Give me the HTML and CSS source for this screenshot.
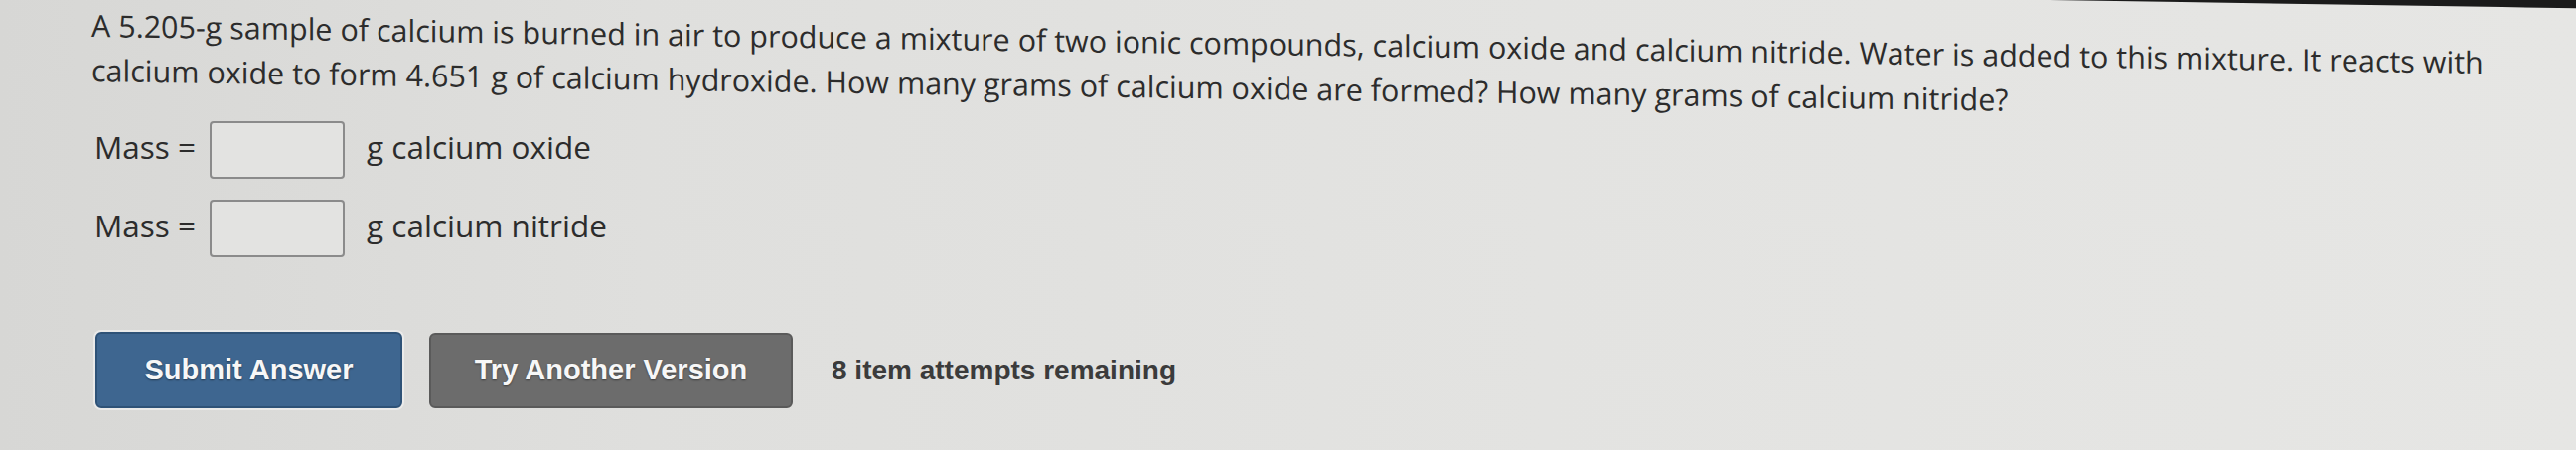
FILE: index.html
```html
<!DOCTYPE html>
<html lang="en">
<head>
<meta charset="utf-8">
<title>Question</title>
<link rel="stylesheet" href="styles.css">
</head>
<body>
<div class="bezel"></div>
<main class="question">
  <p class="prompt">A 5.205-g sample of calcium is burned in air to produce a mixture of two ionic compounds, calcium oxide and calcium nitride. Water is added to this mixture. It reacts with calcium oxide to form 4.651 g of calcium hydroxide. How many grams of calcium oxide are formed? How many grams of calcium nitride?</p>
  <div class="answers">
    <div class="answer-row">
      <span class="label">Mass =</span>
      <input class="answer-box" type="text" aria-label="grams of calcium oxide">
      <span class="unit">g calcium oxide</span>
    </div>
    <div class="answer-row">
      <span class="label">Mass =</span>
      <input class="answer-box" type="text" aria-label="grams of calcium nitride">
      <span class="unit">g calcium nitride</span>
    </div>
  </div>
  <div class="actions">
    <button class="btn btn-primary" type="button">Submit Answer</button>
    <button class="btn btn-secondary" type="button">Try Another Version</button>
    <span class="attempts">8 item attempts remaining</span>
  </div>
</main>
</body>
</html>
```
FILE: styles.css
```css
html {
  background: linear-gradient(90deg, #d7d7d5 0%, #dfdfdd 25%, #e3e3e1 60%, #e6e6e4 100%);
  min-height: 100%;
}

body {
  margin: 0;
  min-height: 453px;
  font-family: "Open Sans", "Liberation Sans", sans-serif;
  color: #2c2c2c;
  overflow: hidden;
}

.bezel {
  position: absolute;
  top: 0;
  right: 0;
  width: 530px;
  height: 9px;
  background: #1b1b1b;
  clip-path: polygon(0 0, 100% 0, 100% 92%, 86% 78%, 25% 22%);
}

.question {
  padding: 3px 0 0 92px;
}

.prompt {
  margin: 0;
  max-width: 2470px;
  font-size: 30.5px;
  line-height: 45px;
  transform: skewY(0.88deg);
  transform-origin: 0 0;
}

.answers {
  margin-top: 29px;
  padding-left: 3px;
  display: flex;
  flex-direction: column;
  gap: 21px;
}

.answer-row {
  display: flex;
  align-items: center;
  height: 58px;
  font-size: 31.5px;
}

.label {
  margin-right: 14px;
  padding-bottom: 7px;
}

.answer-box {
  box-sizing: border-box;
  width: 136px;
  height: 58px;
  margin: 0 22px 0 0;
  border: 2px solid #8b8b8b;
  border-radius: 4px;
  background: #e3e3e1;
}

.unit {
  padding-bottom: 7px;
}

.actions {
  margin-top: 75px;
  padding-left: 4px;
  display: flex;
  align-items: center;
  gap: 27px;
}

.btn {
  box-sizing: border-box;
  height: 77px;
  padding: 0;
  border: 2px solid transparent;
  border-radius: 6px;
  font-family: "Liberation Sans", Arial, sans-serif;
  font-weight: bold;
  font-size: 29px;
  color: #f7f7f7;
  text-shadow: 0 1px 2px rgba(0, 0, 0, 0.45);
}

.btn-primary {
  width: 309px;
  background: #3e6690;
  border-color: #2e5277;
  box-shadow: 0 0 0 2px rgba(245, 245, 245, 0.6);
}

.btn-secondary {
  width: 366px;
  height: 76px;
  background: #6c6c6c;
  border-color: #5a5a5a;
}

.attempts {
  margin-left: 12px;
  font-family: "Liberation Sans", Arial, sans-serif;
  font-weight: bold;
  font-size: 28px;
  color: #3b3b3b;
}
```
